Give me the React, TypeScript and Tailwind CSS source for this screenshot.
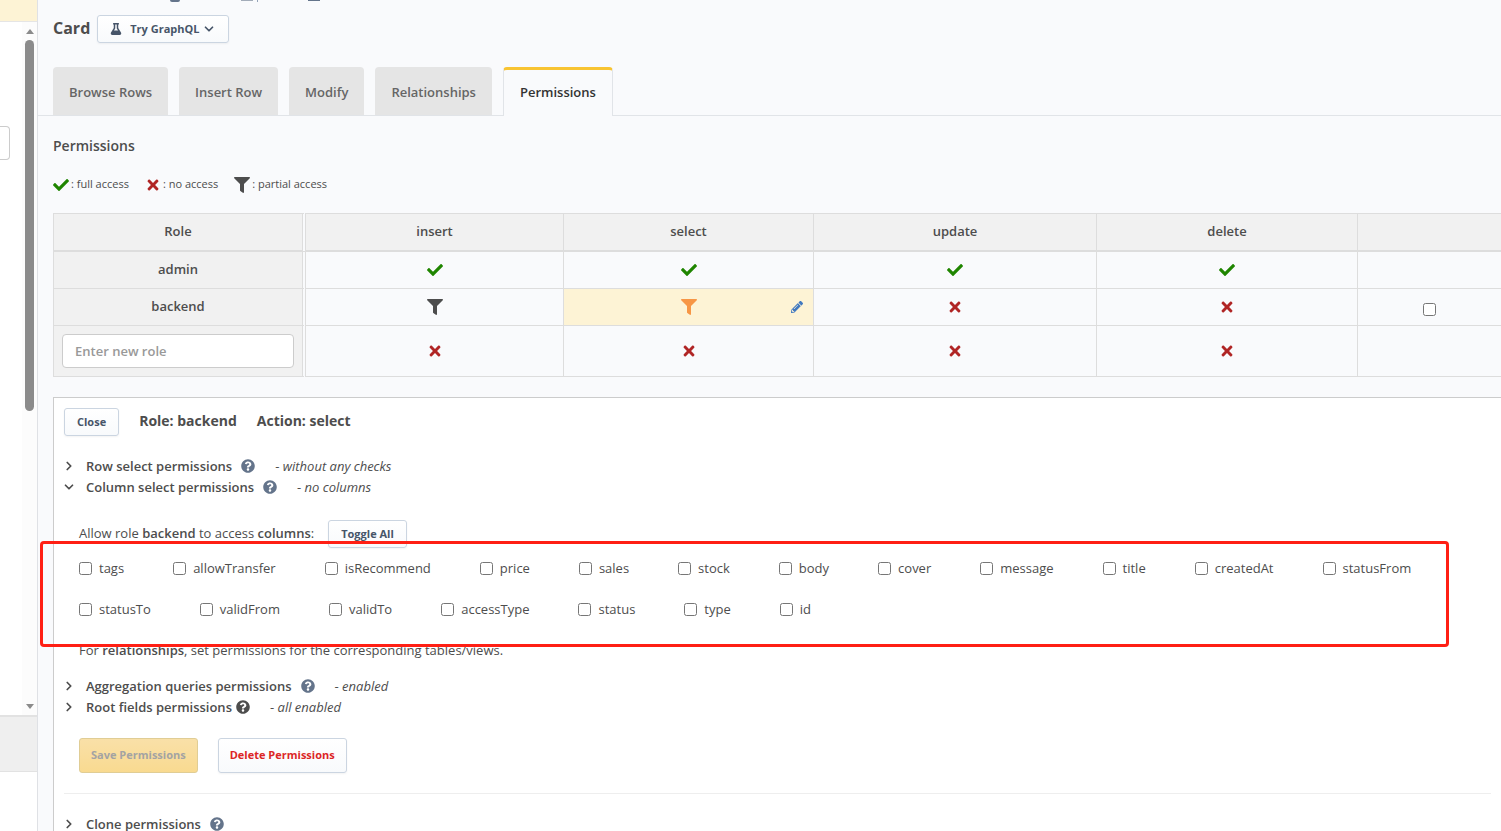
import { useState } from "react";
import type { ReactNode } from "react";
import { ChevronDown, ChevronRight } from "lucide-react";
import { FaCheck, FaFilter, FaFlask, FaPencilAlt, FaQuestionCircle, FaTimes } from "react-icons/fa";

type Access = "full" | "none" | "partial";

const actions = ["insert", "select", "update", "delete"];

const roles: { name: string; access: Access[] }[] = [
  { name: "admin", access: ["full", "full", "full", "full"] },
  { name: "backend", access: ["partial", "partial", "none", "none"] },
];

const tabs = ["Browse Rows", "Insert Row", "Modify", "Relationships", "Permissions"];

const columnRows = [
  [
    "tags",
    "allowTransfer",
    "isRecommend",
    "price",
    "sales",
    "stock",
    "body",
    "cover",
    "message",
    "title",
    "createdAt",
    "statusFrom",
  ],
  ["statusTo", "validFrom", "validTo", "accessType", "status", "type", "id"],
];

const allColumns = columnRows.flat();

function AccessIcon({ access, active }: { access: Access; active?: boolean }) {
  if (access === "full") return <FaCheck className="size-4 text-[#1f8500]" />;
  if (access === "none") return <FaTimes className="size-4 text-[#b02525]" />;
  return <FaFilter className={active ? "size-4 text-[#f79645]" : "size-4 text-[#4d4d4d]"} />;
}

function Button({ children, onClick }: { children: ReactNode; onClick?: () => void }) {
  return (
    <button
      type="button"
      onClick={onClick}
      className="flex h-7 items-center rounded-[3px] border border-[#cbd5e1] bg-linear-to-b from-white to-[#f8fafc] px-3 text-[11px] font-bold text-[#475569] shadow-xs"
    >
      {children}
    </button>
  );
}

type SectionProps = {
  title: string;
  status?: string;
  open?: boolean;
  dark?: boolean;
};

function SectionHeader({ title, status, open, dark }: SectionProps) {
  return (
    <button type="button" className="flex h-[21px] items-center text-left">
      <span className="flex w-[22px]">
        {open ? (
          <ChevronDown className="-ml-0.5 size-3.5" strokeWidth={3} />
        ) : (
          <ChevronRight className="-ml-0.5 size-3.5" strokeWidth={3} />
        )}
      </span>
      <span className="font-semibold">{title}</span>
      <FaQuestionCircle className={dark ? "ml-1 size-3.5" : "ml-[9px] size-3.5 text-[#64748b]"} />
      {status && (
        <span className="ml-5">
          - <i>{status}</i>
        </span>
      )}
    </button>
  );
}

function Sidebar() {
  return (
    <aside className="flex w-[38px] shrink-0 flex-col border-r border-[#dfe1e5] bg-white">
      <div className="h-[22px] shrink-0 border-b border-[#e5e5e5] bg-[#fdf3d5]" />
      <div className="flex h-[693px] shrink-0 justify-between">
        <div className="mt-[104px] h-[34px] w-2.5 rounded-r border border-l-0 border-[#ccc]" />
        <div className="flex w-[15px] flex-col items-center justify-between bg-[#fcfcfc] pt-[7px] pb-1.5">
          <div>
            <svg viewBox="0 0 8 5" className="mx-auto mb-1.5 h-[5px] w-2 fill-[#8b8b8b]">
              <path d="M4 0l4 5H0z" />
            </svg>
            <div className="h-[371px] w-[9px] rounded-full bg-[#8b8b8b]" />
          </div>
          <svg viewBox="0 0 8 5" className="h-[5px] w-2 fill-[#8b8b8b]">
            <path d="M4 5L0 0h8z" />
          </svg>
        </div>
      </div>
      <div className="h-[57px] shrink-0 border-t-2 border-b border-[#e2e2e2] bg-[#efefef]" />
    </aside>
  );
}

function PermissionsTable() {
  const cell = "border-r border-b border-[#ddd]";
  const roleCell =
    "border-r-4 border-b border-l border-[#ddd] [border-right-style:double] bg-[#f1f1f1] bg-clip-padding pb-0.5 font-semibold";

  return (
    <table className="mt-5 w-full table-fixed border-separate border-spacing-0 text-center">
      <colgroup>
        <col className="w-[253px]" />
        <col className="w-[258px]" />
        <col className="w-[250px]" />
        <col className="w-[283px]" />
        <col className="w-[261px]" />
        <col />
      </colgroup>
      <thead>
        <tr className="h-[39px]">
          <th className={`${roleCell} border-t border-b-2`}>Role</th>
          {actions.map((action) => (
            <th
              key={action}
              className="border-t border-r border-b-2 border-[#ddd] bg-[#f1f1f1] pb-0.5 font-semibold"
            >
              {action}
            </th>
          ))}
          <th className="border-t border-b-2 border-[#ddd] bg-[#f1f1f1]" />
        </tr>
      </thead>
      <tbody>
        {roles.map((role) => (
          <tr key={role.name} className="h-[37px]">
            <th className={roleCell}>{role.name}</th>
            {role.access.map((access, i) => {
              const active = role.name === "backend" && actions[i] === "select";
              return (
                <td key={actions[i]} className={`${cell} ${active ? "bg-[#fdf3d5]" : ""}`}>
                  <div className="relative flex justify-center">
                    <AccessIcon access={access} active={active} />
                    {active && <FaPencilAlt className="absolute top-0.5 right-2.5 size-3 text-[#4078c0]" />}
                  </div>
                </td>
              );
            })}
            <td className="border-b border-[#ddd]">
              {role.name === "backend" && (
                <input type="checkbox" aria-label="Select backend" className="mx-auto mt-1 block size-[13px]" />
              )}
            </td>
          </tr>
        ))}
        <tr className="h-[51px]">
          <th className={`${roleCell} px-2 pt-0.5`}>
            <input
              type="text"
              aria-label="New role"
              placeholder="Enter new role"
              className="block h-[34px] w-full rounded border border-[#ccc] bg-white px-3 font-semibold placeholder:text-[#999]"
            />
          </th>
          {actions.map((action) => (
            <td key={action} className={cell}>
              <div className="flex justify-center">
                <AccessIcon access="none" />
              </div>
            </td>
          ))}
          <td className="border-b border-[#ddd]" />
        </tr>
      </tbody>
    </table>
  );
}

function ColumnPicker() {
  const [selected, setSelected] = useState<string[]>([]);

  const toggle = (name: string) =>
    setSelected((s) => (s.includes(name) ? s.filter((c) => c !== name) : [...s, name]));

  const toggleAll = () => setSelected((s) => (s.length === allColumns.length ? [] : allColumns));

  return (
    <div className="mt-[23px] ml-[15px]">
      <div className="flex items-center gap-3.5">
        <span className="pb-0.5">
          Allow role <b className="font-semibold">backend</b> to access <b className="font-semibold">columns</b>:
        </span>
        <Button onClick={toggleAll}>Toggle All</Button>
      </div>
      <div className="relative">
        {columnRows.map((row) => (
          <div key={row[0]} className="flex h-[41px] items-center gap-[49px]">
            {row.map((name) => (
              <label key={name} className="flex items-center gap-[7px]">
                <input
                  type="checkbox"
                  className="size-[13px]"
                  checked={selected.includes(name)}
                  onChange={() => toggle(name)}
                />
                <span className="pb-0.5">{name}</span>
              </label>
            ))}
          </div>
        ))}
        {/* highlight */}
        <div className="pointer-events-none absolute -top-[7px] right-[42px] -bottom-[17px] -left-[39px] rounded-sm border-3 border-[#ff1f14]" />
      </div>
      <p className="flex h-[41px] items-center">
        <span className="pb-0.5">
          For <b className="font-semibold">relationships</b>, set permissions for the corresponding tables/views.
        </span>
      </p>
    </div>
  );
}

export default function App() {
  const [tab, setTab] = useState("Permissions");

  return (
    <div className="flex h-screen overflow-hidden bg-[#f9fafc] font-['Open_Sans',sans-serif] text-[13px] leading-5 text-[#4d4d4d]">
      <Sidebar />
      <main className="min-w-0 flex-1">
        {/* bottom edge of the breadcrumb icons */}
        <div className="flex h-[15px] items-start pl-[132px]">
          <div className="h-0.5 w-2.5 rounded-b-full bg-[#64748b]" />
          <div className="ml-[61px] h-px w-3 bg-[#a3acb9]" />
          <div className="ml-1 h-0.5 w-px bg-[#94a3b8]" />
          <div className="ml-[50px] h-px w-3 bg-[#64748b]" />
        </div>
        <header className="flex items-center gap-[7px] pl-[15px]">
          <h1 className="pb-0.5 text-base font-bold">Card</h1>
          <Button>
            <FaFlask className="mr-2 size-3" />
            Try GraphQL
            <ChevronDown className="ml-0.5 size-3.5" strokeWidth={3} />
          </Button>
        </header>
        <nav className="mt-6 flex h-[49px] gap-[11px] border-b border-[#e1e4e8] pl-[15px]">
          {tabs.map((name) => (
            <button
              key={name}
              type="button"
              onClick={() => setTab(name)}
              className={
                tab === name
                  ? "-mb-px rounded-t-sm border-x border-t-3 border-x-[#e1e4e8] border-t-[#f8c432] bg-[#f9fafc] px-4 pb-0.5 font-semibold text-[#333]"
                  : "rounded-t-sm bg-[#e5e5e5] px-4 pt-0.5 font-semibold text-[#666]"
              }
            >
              {name}
            </button>
          ))}
        </nav>
        <div className="pl-[15px]">
          <h2 className="mt-5 text-sm leading-5 font-semibold">Permissions</h2>
          <div className="mt-5 flex h-[17px] items-center gap-4 text-[11px]">
            <span className="flex items-center gap-0.5">
              <AccessIcon access="full" />
              <span className="pb-0.5">: full access</span>
            </span>
            <span className="flex items-center gap-0.5">
              <AccessIcon access="none" />
              <span className="pb-0.5">: no access</span>
            </span>
            <span className="flex items-center gap-0.5">
              <AccessIcon access="partial" />
              <span className="pb-0.5">: partial access</span>
            </span>
          </div>
          <PermissionsTable />
          <section className="mt-5 border-t border-l border-[#ccc] bg-white p-2.5">
            <div className="flex items-center gap-5">
              <Button>Close</Button>
              <h3 className="pb-0.5 text-sm leading-5 font-bold">Role: backend</h3>
              <h3 className="pb-0.5 text-sm leading-5 font-bold">Action: select</h3>
            </div>
            <div className="mt-[19px] flex flex-col items-start">
              <SectionHeader title="Row select permissions" status="without any checks" />
              <SectionHeader title="Column select permissions" status="no columns" open />
            </div>
            <ColumnPicker />
            <div className="mt-1 flex flex-col items-start">
              <SectionHeader title="Aggregation queries permissions" status="enabled" />
              <SectionHeader title="Root fields permissions" status="all enabled" dark />
            </div>
            <div className="mt-[21px] ml-[15px] flex gap-5">
              <button
                type="button"
                disabled
                className="h-[35px] rounded-[3px] border border-[#e0cd95] bg-linear-to-b from-[#f9e0a8] to-[#f9da90] px-[11px] pb-0.5 text-[11px] font-bold text-[#a3a3a3]"
              >
                Save Permissions
              </button>
              <button
                type="button"
                className="h-[35px] rounded-[3px] border border-[#cbd5e1] bg-linear-to-b from-white to-[#f8fafc] px-[11px] pb-0.5 text-[11px] font-bold text-[#dc2626] shadow-xs"
              >
                Delete Permissions
              </button>
            </div>
            <hr className="mt-5 mb-[19px] border-[#eee]" />
            <SectionHeader title="Clone permissions" />
          </section>
        </div>
      </main>
    </div>
  );
}
